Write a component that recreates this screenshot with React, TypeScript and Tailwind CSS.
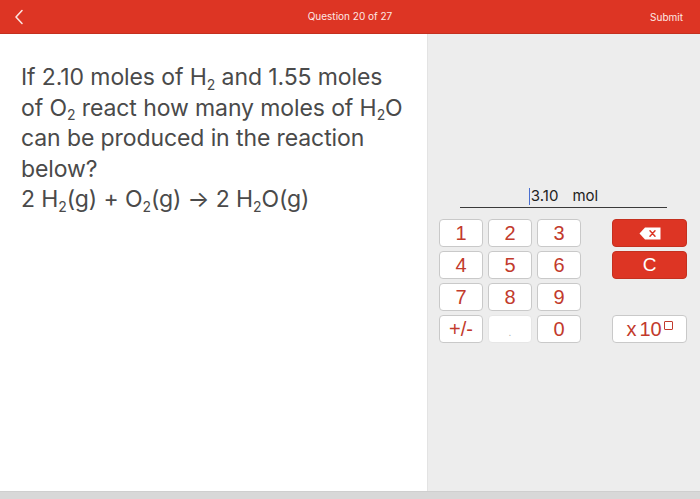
import React from "react";

const Sub = ({ children }: { children: React.ReactNode }) => (
  <sub className="text-[14px] align-[-1px] leading-none">{children}</sub>
);

const Key = ({ label, faint }: { label: string; faint?: boolean }) => (
  <div
    className={`h-[28px] w-[44px] rounded-[4px] bg-white flex items-center justify-center text-[20px] text-[#c23a2c] ${
      faint ? "border border-[#e6e6e6]" : "border border-[#c9c9c9]"
    }`}
    style={{ fontFamily: "'Liberation Sans', Arial, sans-serif" }}
  >
    {faint ? <span className="text-[10px] text-[#b0b0b0] translate-y-[3px]">.</span> : label}
  </div>
);

export default function App() {
  return (
    <div
      className="w-[700px] h-[499px] flex flex-col bg-white overflow-hidden"
      style={{ fontFamily: "Inter, 'Noto Sans', sans-serif" }}
    >
      <div className="h-[34px] bg-[#dd3524] border-b border-[#c4301f] flex items-center relative shrink-0">
        <svg className="absolute left-[13px] top-[9px]" width="12" height="16" viewBox="0 0 12 16">
          <path d="M9 1.5 L3 8 L9 14.5" fill="none" stroke="#fbe3df" strokeWidth="1.6" strokeLinecap="round" strokeLinejoin="round" />
        </svg>
        <div className="flex-1 text-center text-[10px] text-[#fde8e4]">Question 20 of 27</div>
        <div className="absolute right-[17px] top-[10px] text-[10px] text-[#fde8e4]">Submit</div>
      </div>
      <div className="flex flex-1 min-h-0">
        <div className="w-[427px] pl-[21px] pt-[28px] text-[23px] leading-[30.5px] text-[#4a4a4a] tracking-[-0.1px]">
          <div>
            If 2.10 moles of H<Sub>2</Sub> and 1.55 moles
          </div>
          <div>
            of O<Sub>2</Sub> react how many moles of H<Sub>2</Sub>O
          </div>
          <div>can be produced in the reaction</div>
          <div>below?</div>
          <div>
            2 H<Sub>2</Sub>(g) + O<Sub>2</Sub>(g) → 2 H<Sub>2</Sub>O(g)
          </div>
        </div>
        <div className="flex-1 bg-[#ededed] border-l border-[#e3e3e3] pt-[152px] flex flex-col">
          <div className="ml-[32px] w-[207px] h-[22px] border-b border-[#3a3a3a] flex items-center justify-center text-[15px] text-[#222]">
            <span className="w-px h-[17px] bg-[#4a6fd0] mr-[1px]" />
            <span>3.10</span>
            <span className="ml-[14px]">mol</span>
          </div>
          <div className="flex mt-[11px] pl-[11px]">
            <div className="grid grid-cols-3 gap-x-[5px] gap-y-[4px]">
              {["1", "2", "3", "4", "5", "6", "7", "8", "9", "+/-"].map((k) => (
                <Key key={k} label={k} />
              ))}
              <Key label="." faint />
              <Key label="0" />
            </div>
            <div className="ml-[31px] flex flex-col gap-[4px]">
              <div className="h-[28px] w-[75px] rounded-[4px] bg-[#dd3524] border border-[#c4301f] flex items-center justify-center">
                <svg width="22" height="13" viewBox="0 0 22 13">
                  <path d="M6 0.5 H21.5 V12.5 H6 L0.5 6.5 Z" fill="#ffffff" />
                  <path d="M11 3.8 L16 9.2 M16 3.8 L11 9.2" stroke="#dd3524" strokeWidth="1.5" strokeLinecap="round" />
                </svg>
              </div>
              <div
                className="h-[28px] w-[75px] rounded-[4px] bg-[#dd3524] border border-[#c4301f] flex items-center justify-center text-[19px] text-white"
                style={{ fontFamily: "'Liberation Sans', Arial, sans-serif" }}
              >
                C
              </div>
              <div className="h-[28px] w-[75px]" />
              <div
                className="h-[28px] w-[75px] rounded-[4px] bg-white border border-[#c9c9c9] flex items-center justify-center text-[20px] text-[#c23a2c]"
                style={{ fontFamily: "'Liberation Sans', Arial, sans-serif" }}
              >
                <span>x</span>
                <span className="ml-[3px]">10</span>
                <span className="ml-[2px] mb-[7px] w-[9px] h-[9px] border border-[#c23a2c] rounded-[1px]" />
              </div>
            </div>
          </div>
        </div>
      </div>
      <div className="h-[8px] bg-[#d8d8d8] shrink-0 border-t border-[#cfcfcf]" />
    </div>
  );
}
